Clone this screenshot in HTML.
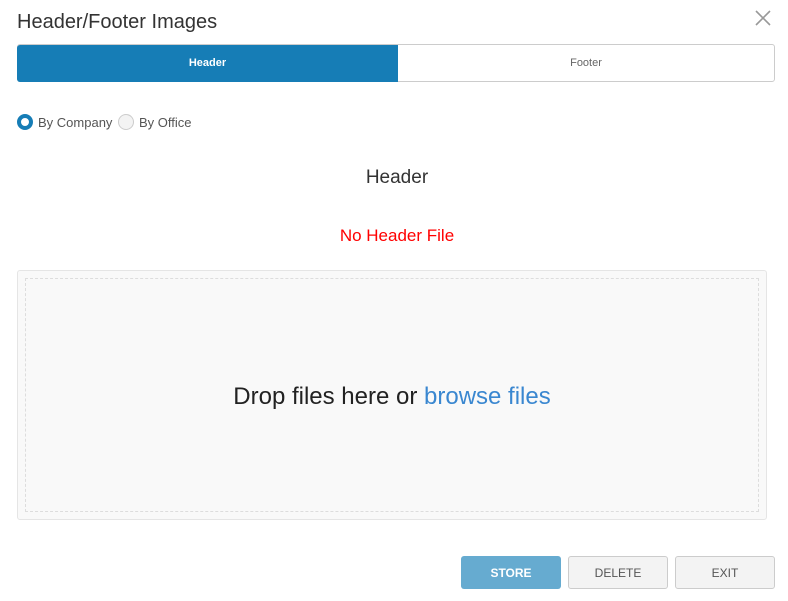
<!DOCTYPE html><html><head><style>
body{margin:0;width:788px;height:601px;background:#fff;font-family:"Liberation Sans",sans-serif;position:relative;overflow:hidden;color:#333}
.a{position:absolute}
</style></head><body>
<div class="a" style="left:17px;top:11px;font-size:20px;color:#333">Header/Footer Images</div>
<svg class="a" style="left:755px;top:10px" width="16" height="16"><path d="M1 1L15 15M15 1L1 15" stroke="#999" stroke-width="1.6"/></svg>
<div class="a" style="left:17px;top:44px;width:756px;height:36px;border:1px solid #ccc;border-radius:3px"></div>
<div class="a" style="left:17px;top:45px;width:381px;height:37px;background:#167db6;border-radius:3px 0 0 3px;color:#fff;font-weight:bold;font-size:11px;text-align:center;line-height:37px">Header</div>
<div class="a" style="left:398px;top:45px;width:376px;height:37px;color:#666;font-size:11px;text-align:center;line-height:37px">Footer</div>
<div class="a" style="left:17px;top:114px;width:8px;height:8px;border:4px solid #167db6;border-radius:50%;background:#fff"></div>
<div class="a" style="left:38px;top:115px;font-size:13px;color:#555">By Company</div>
<div class="a" style="left:118px;top:114px;width:14px;height:14px;border:1px solid #ccc;border-radius:50%;background:#f3f3f3"></div>
<div class="a" style="left:139px;top:115px;font-size:13px;color:#555">By Office</div>
<div class="a" style="left:0;width:794px;top:167px;text-align:center;font-size:19px;color:#333">Header</div>
<div class="a" style="left:0;width:794px;top:226px;text-align:center;font-size:17px;color:#f00">No Header File</div>
<div class="a" style="left:17px;top:270px;width:748px;height:248px;border:1px solid #e5e5e5;border-radius:3px;background:#f9f9f9"></div>
<div class="a" style="left:25px;top:278px;width:732px;height:232px;border:1px dashed #ddd"></div>
<div class="a" style="left:0;width:784px;top:383px;text-align:center;font-size:24px;color:#222">Drop files here or <span style="color:#3a87d0">browse files</span></div>
<div class="a" style="left:461px;top:556px;width:100px;height:33px;background:#66abd0;border-radius:3px;color:#fff;font-weight:bold;font-size:12px;text-align:center;line-height:34px">STORE</div>
<div class="a" style="left:568px;top:556px;width:98px;height:31px;background:#f3f3f3;border:1px solid #ccc;border-radius:3px;color:#555;font-size:12px;text-align:center;line-height:32px">DELETE</div>
<div class="a" style="left:675px;top:556px;width:98px;height:31px;background:#f3f3f3;border:1px solid #ccc;border-radius:3px;color:#555;font-size:12px;text-align:center;line-height:32px">EXIT</div>
</body></html>
